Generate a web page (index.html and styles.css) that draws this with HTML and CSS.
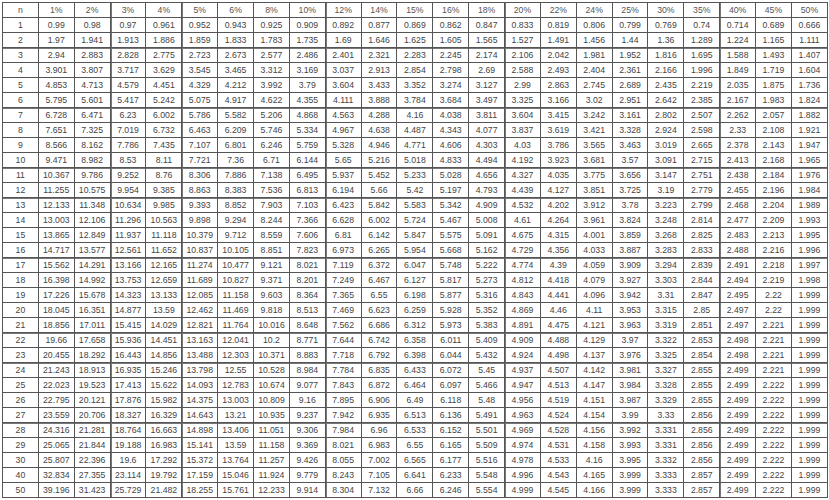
FILE: index.html
```html
<!DOCTYPE html>
<html>
<head>
<meta charset="utf-8">
<title>Present value annuity table</title>
<link rel="stylesheet" href="styles.css">
</head>
<body>
<table class="pv">
<tr class="hd"><td>n</td><td>1%</td><td>2%</td><td>3%</td><td>4%</td><td>5%</td><td>6%</td><td>8%</td><td>10%</td><td>12%</td><td>14%</td><td>15%</td><td>16%</td><td>18%</td><td>20%</td><td>22%</td><td>24%</td><td>25%</td><td>30%</td><td>35%</td><td>40%</td><td>45%</td><td>50%</td></tr>
<tr><td>1</td><td>0.99</td><td>0.98</td><td>0.97</td><td>0.961</td><td>0.952</td><td>0.943</td><td>0.925</td><td>0.909</td><td>0.892</td><td>0.877</td><td>0.869</td><td>0.862</td><td>0.847</td><td>0.833</td><td>0.819</td><td>0.806</td><td>0.799</td><td>0.769</td><td>0.74</td><td>0.714</td><td>0.689</td><td>0.666</td></tr>
<tr><td>2</td><td>1.97</td><td>1.941</td><td>1.913</td><td>1.886</td><td>1.859</td><td>1.833</td><td>1.783</td><td>1.735</td><td>1.69</td><td>1.646</td><td>1.625</td><td>1.605</td><td>1.565</td><td>1.527</td><td>1.491</td><td>1.456</td><td>1.44</td><td>1.36</td><td>1.289</td><td>1.224</td><td>1.165</td><td>1.111</td></tr>
<tr class="thick"><td>3</td><td>2.94</td><td>2.883</td><td>2.828</td><td>2.775</td><td>2.723</td><td>2.673</td><td>2.577</td><td>2.486</td><td>2.401</td><td>2.321</td><td>2.283</td><td>2.245</td><td>2.174</td><td>2.106</td><td>2.042</td><td>1.981</td><td>1.952</td><td>1.816</td><td>1.695</td><td>1.588</td><td>1.493</td><td>1.407</td></tr>
<tr><td>4</td><td>3.901</td><td>3.807</td><td>3.717</td><td>3.629</td><td>3.545</td><td>3.465</td><td>3.312</td><td>3.169</td><td>3.037</td><td>2.913</td><td>2.854</td><td>2.798</td><td>2.69</td><td>2.588</td><td>2.493</td><td>2.404</td><td>2.361</td><td>2.166</td><td>1.996</td><td>1.849</td><td>1.719</td><td>1.604</td></tr>
<tr><td>5</td><td>4.853</td><td>4.713</td><td>4.579</td><td>4.451</td><td>4.329</td><td>4.212</td><td>3.992</td><td>3.79</td><td>3.604</td><td>3.433</td><td>3.352</td><td>3.274</td><td>3.127</td><td>2.99</td><td>2.863</td><td>2.745</td><td>2.689</td><td>2.435</td><td>2.219</td><td>2.035</td><td>1.875</td><td>1.736</td></tr>
<tr><td>6</td><td>5.795</td><td>5.601</td><td>5.417</td><td>5.242</td><td>5.075</td><td>4.917</td><td>4.622</td><td>4.355</td><td>4.111</td><td>3.888</td><td>3.784</td><td>3.684</td><td>3.497</td><td>3.325</td><td>3.166</td><td>3.02</td><td>2.951</td><td>2.642</td><td>2.385</td><td>2.167</td><td>1.983</td><td>1.824</td></tr>
<tr class="thick"><td>7</td><td>6.728</td><td>6.471</td><td>6.23</td><td>6.002</td><td>5.786</td><td>5.582</td><td>5.206</td><td>4.868</td><td>4.563</td><td>4.288</td><td>4.16</td><td>4.038</td><td>3.811</td><td>3.604</td><td>3.415</td><td>3.242</td><td>3.161</td><td>2.802</td><td>2.507</td><td>2.262</td><td>2.057</td><td>1.882</td></tr>
<tr><td>8</td><td>7.651</td><td>7.325</td><td>7.019</td><td>6.732</td><td>6.463</td><td>6.209</td><td>5.746</td><td>5.334</td><td>4.967</td><td>4.638</td><td>4.487</td><td>4.343</td><td>4.077</td><td>3.837</td><td>3.619</td><td>3.421</td><td>3.328</td><td>2.924</td><td>2.598</td><td>2.33</td><td>2.108</td><td>1.921</td></tr>
<tr><td>9</td><td>8.566</td><td>8.162</td><td>7.786</td><td>7.435</td><td>7.107</td><td>6.801</td><td>6.246</td><td>5.759</td><td>5.328</td><td>4.946</td><td>4.771</td><td>4.606</td><td>4.303</td><td>4.03</td><td>3.786</td><td>3.565</td><td>3.463</td><td>3.019</td><td>2.665</td><td>2.378</td><td>2.143</td><td>1.947</td></tr>
<tr><td>10</td><td>9.471</td><td>8.982</td><td>8.53</td><td>8.11</td><td>7.721</td><td>7.36</td><td>6.71</td><td>6.144</td><td>5.65</td><td>5.216</td><td>5.018</td><td>4.833</td><td>4.494</td><td>4.192</td><td>3.923</td><td>3.681</td><td>3.57</td><td>3.091</td><td>2.715</td><td>2.413</td><td>2.168</td><td>1.965</td></tr>
<tr class="thick"><td>11</td><td>10.367</td><td>9.786</td><td>9.252</td><td>8.76</td><td>8.306</td><td>7.886</td><td>7.138</td><td>6.495</td><td>5.937</td><td>5.452</td><td>5.233</td><td>5.028</td><td>4.656</td><td>4.327</td><td>4.035</td><td>3.775</td><td>3.656</td><td>3.147</td><td>2.751</td><td>2.438</td><td>2.184</td><td>1.976</td></tr>
<tr><td>12</td><td>11.255</td><td>10.575</td><td>9.954</td><td>9.385</td><td>8.863</td><td>8.383</td><td>7.536</td><td>6.813</td><td>6.194</td><td>5.66</td><td>5.42</td><td>5.197</td><td>4.793</td><td>4.439</td><td>4.127</td><td>3.851</td><td>3.725</td><td>3.19</td><td>2.779</td><td>2.455</td><td>2.196</td><td>1.984</td></tr>
<tr class="thick"><td>13</td><td>12.133</td><td>11.348</td><td>10.634</td><td>9.985</td><td>9.393</td><td>8.852</td><td>7.903</td><td>7.103</td><td>6.423</td><td>5.842</td><td>5.583</td><td>5.342</td><td>4.909</td><td>4.532</td><td>4.202</td><td>3.912</td><td>3.78</td><td>3.223</td><td>2.799</td><td>2.468</td><td>2.204</td><td>1.989</td></tr>
<tr><td>14</td><td>13.003</td><td>12.106</td><td>11.296</td><td>10.563</td><td>9.898</td><td>9.294</td><td>8.244</td><td>7.366</td><td>6.628</td><td>6.002</td><td>5.724</td><td>5.467</td><td>5.008</td><td>4.61</td><td>4.264</td><td>3.961</td><td>3.824</td><td>3.248</td><td>2.814</td><td>2.477</td><td>2.209</td><td>1.993</td></tr>
<tr><td>15</td><td>13.865</td><td>12.849</td><td>11.937</td><td>11.118</td><td>10.379</td><td>9.712</td><td>8.559</td><td>7.606</td><td>6.81</td><td>6.142</td><td>5.847</td><td>5.575</td><td>5.091</td><td>4.675</td><td>4.315</td><td>4.001</td><td>3.859</td><td>3.268</td><td>2.825</td><td>2.483</td><td>2.213</td><td>1.995</td></tr>
<tr><td>16</td><td>14.717</td><td>13.577</td><td>12.561</td><td>11.652</td><td>10.837</td><td>10.105</td><td>8.851</td><td>7.823</td><td>6.973</td><td>6.265</td><td>5.954</td><td>5.668</td><td>5.162</td><td>4.729</td><td>4.356</td><td>4.033</td><td>3.887</td><td>3.283</td><td>2.833</td><td>2.488</td><td>2.216</td><td>1.996</td></tr>
<tr class="thick"><td>17</td><td>15.562</td><td>14.291</td><td>13.166</td><td>12.165</td><td>11.274</td><td>10.477</td><td>9.121</td><td>8.021</td><td>7.119</td><td>6.372</td><td>6.047</td><td>5.748</td><td>5.222</td><td>4.774</td><td>4.39</td><td>4.059</td><td>3.909</td><td>3.294</td><td>2.839</td><td>2.491</td><td>2.218</td><td>1.997</td></tr>
<tr><td>18</td><td>16.398</td><td>14.992</td><td>13.753</td><td>12.659</td><td>11.689</td><td>10.827</td><td>9.371</td><td>8.201</td><td>7.249</td><td>6.467</td><td>6.127</td><td>5.817</td><td>5.273</td><td>4.812</td><td>4.418</td><td>4.079</td><td>3.927</td><td>3.303</td><td>2.844</td><td>2.494</td><td>2.219</td><td>1.998</td></tr>
<tr><td>19</td><td>17.226</td><td>15.678</td><td>14.323</td><td>13.133</td><td>12.085</td><td>11.158</td><td>9.603</td><td>8.364</td><td>7.365</td><td>6.55</td><td>6.198</td><td>5.877</td><td>5.316</td><td>4.843</td><td>4.441</td><td>4.096</td><td>3.942</td><td>3.31</td><td>2.847</td><td>2.495</td><td>2.22</td><td>1.999</td></tr>
<tr><td>20</td><td>18.045</td><td>16.351</td><td>14.877</td><td>13.59</td><td>12.462</td><td>11.469</td><td>9.818</td><td>8.513</td><td>7.469</td><td>6.623</td><td>6.259</td><td>5.928</td><td>5.352</td><td>4.869</td><td>4.46</td><td>4.11</td><td>3.953</td><td>3.315</td><td>2.85</td><td>2.497</td><td>2.22</td><td>1.999</td></tr>
<tr><td>21</td><td>18.856</td><td>17.011</td><td>15.415</td><td>14.029</td><td>12.821</td><td>11.764</td><td>10.016</td><td>8.648</td><td>7.562</td><td>6.686</td><td>6.312</td><td>5.973</td><td>5.383</td><td>4.891</td><td>4.475</td><td>4.121</td><td>3.963</td><td>3.319</td><td>2.851</td><td>2.497</td><td>2.221</td><td>1.999</td></tr>
<tr class="thick"><td>22</td><td>19.66</td><td>17.658</td><td>15.936</td><td>14.451</td><td>13.163</td><td>12.041</td><td>10.2</td><td>8.771</td><td>7.644</td><td>6.742</td><td>6.358</td><td>6.011</td><td>5.409</td><td>4.909</td><td>4.488</td><td>4.129</td><td>3.97</td><td>3.322</td><td>2.853</td><td>2.498</td><td>2.221</td><td>1.999</td></tr>
<tr><td>23</td><td>20.455</td><td>18.292</td><td>16.443</td><td>14.856</td><td>13.488</td><td>12.303</td><td>10.371</td><td>8.883</td><td>7.718</td><td>6.792</td><td>6.398</td><td>6.044</td><td>5.432</td><td>4.924</td><td>4.498</td><td>4.137</td><td>3.976</td><td>3.325</td><td>2.854</td><td>2.498</td><td>2.221</td><td>1.999</td></tr>
<tr class="thick"><td>24</td><td>21.243</td><td>18.913</td><td>16.935</td><td>15.246</td><td>13.798</td><td>12.55</td><td>10.528</td><td>8.984</td><td>7.784</td><td>6.835</td><td>6.433</td><td>6.072</td><td>5.45</td><td>4.937</td><td>4.507</td><td>4.142</td><td>3.981</td><td>3.327</td><td>2.855</td><td>2.499</td><td>2.221</td><td>1.999</td></tr>
<tr><td>25</td><td>22.023</td><td>19.523</td><td>17.413</td><td>15.622</td><td>14.093</td><td>12.783</td><td>10.674</td><td>9.077</td><td>7.843</td><td>6.872</td><td>6.464</td><td>6.097</td><td>5.466</td><td>4.947</td><td>4.513</td><td>4.147</td><td>3.984</td><td>3.328</td><td>2.855</td><td>2.499</td><td>2.222</td><td>1.999</td></tr>
<tr><td>26</td><td>22.795</td><td>20.121</td><td>17.876</td><td>15.982</td><td>14.375</td><td>13.003</td><td>10.809</td><td>9.16</td><td>7.895</td><td>6.906</td><td>6.49</td><td>6.118</td><td>5.48</td><td>4.956</td><td>4.519</td><td>4.151</td><td>3.987</td><td>3.329</td><td>2.855</td><td>2.499</td><td>2.222</td><td>1.999</td></tr>
<tr><td>27</td><td>23.559</td><td>20.706</td><td>18.327</td><td>16.329</td><td>14.643</td><td>13.21</td><td>10.935</td><td>9.237</td><td>7.942</td><td>6.935</td><td>6.513</td><td>6.136</td><td>5.491</td><td>4.963</td><td>4.524</td><td>4.154</td><td>3.99</td><td>3.33</td><td>2.856</td><td>2.499</td><td>2.222</td><td>1.999</td></tr>
<tr class="thick"><td>28</td><td>24.316</td><td>21.281</td><td>18.764</td><td>16.663</td><td>14.898</td><td>13.406</td><td>11.051</td><td>9.306</td><td>7.984</td><td>6.96</td><td>6.533</td><td>6.152</td><td>5.501</td><td>4.969</td><td>4.528</td><td>4.156</td><td>3.992</td><td>3.331</td><td>2.856</td><td>2.499</td><td>2.222</td><td>1.999</td></tr>
<tr><td>29</td><td>25.065</td><td>21.844</td><td>19.188</td><td>16.983</td><td>15.141</td><td>13.59</td><td>11.158</td><td>9.369</td><td>8.021</td><td>6.983</td><td>6.55</td><td>6.165</td><td>5.509</td><td>4.974</td><td>4.531</td><td>4.158</td><td>3.993</td><td>3.331</td><td>2.856</td><td>2.499</td><td>2.222</td><td>1.999</td></tr>
<tr><td>30</td><td>25.807</td><td>22.396</td><td>19.6</td><td>17.292</td><td>15.372</td><td>13.764</td><td>11.257</td><td>9.426</td><td>8.055</td><td>7.002</td><td>6.565</td><td>6.177</td><td>5.516</td><td>4.978</td><td>4.533</td><td>4.16</td><td>3.995</td><td>3.332</td><td>2.856</td><td>2.499</td><td>2.222</td><td>1.999</td></tr>
<tr><td>40</td><td>32.834</td><td>27.355</td><td>23.114</td><td>19.792</td><td>17.159</td><td>15.046</td><td>11.924</td><td>9.779</td><td>8.243</td><td>7.105</td><td>6.641</td><td>6.233</td><td>5.548</td><td>4.996</td><td>4.543</td><td>4.165</td><td>3.999</td><td>3.333</td><td>2.857</td><td>2.499</td><td>2.222</td><td>1.999</td></tr>
<tr><td>50</td><td>39.196</td><td>31.423</td><td>25.729</td><td>21.482</td><td>18.255</td><td>15.761</td><td>12.233</td><td>9.914</td><td>8.304</td><td>7.132</td><td>6.66</td><td>6.246</td><td>5.554</td><td>4.999</td><td>4.545</td><td>4.166</td><td>3.999</td><td>3.333</td><td>2.857</td><td>2.499</td><td>2.222</td><td>1.999</td></tr>
</table>
</body>
</html>
```
FILE: styles.css
```css
html, body {
  margin: 0;
  padding: 0;
  background: #ffffff;
}
body {
  padding: 2px 0 0 2px;
}
.pv {
  border-collapse: collapse;
  table-layout: fixed;
  width: 826px;
  font-family: "Liberation Sans", Arial, sans-serif;
  font-size: 8.7px;
  color: #444444;
  border: 1px solid #333333;
}
.pv td {
  --h: 0 0 0 transparent;
  --v: 0 0 0 transparent;
  border: 1px solid #555555;
  height: 14px;
  padding: 0;
  line-height: 14px;
  text-align: center;
  white-space: nowrap;
  overflow: hidden;
  box-shadow: var(--h), var(--v);
}
.pv tr.hd td {
  color: #555555;
}
.pv tr.thick td {
  border-top-color: #1a1a1a;
  --h: inset 0 1px 0 #777777;
}
.pv td:nth-child(4),
.pv td:nth-child(6),
.pv td:nth-child(10),
.pv td:nth-child(15),
.pv td:nth-child(21) {
  border-left-color: #1a1a1a;
  --v: inset 1px 0 0 #777777;
}
```
